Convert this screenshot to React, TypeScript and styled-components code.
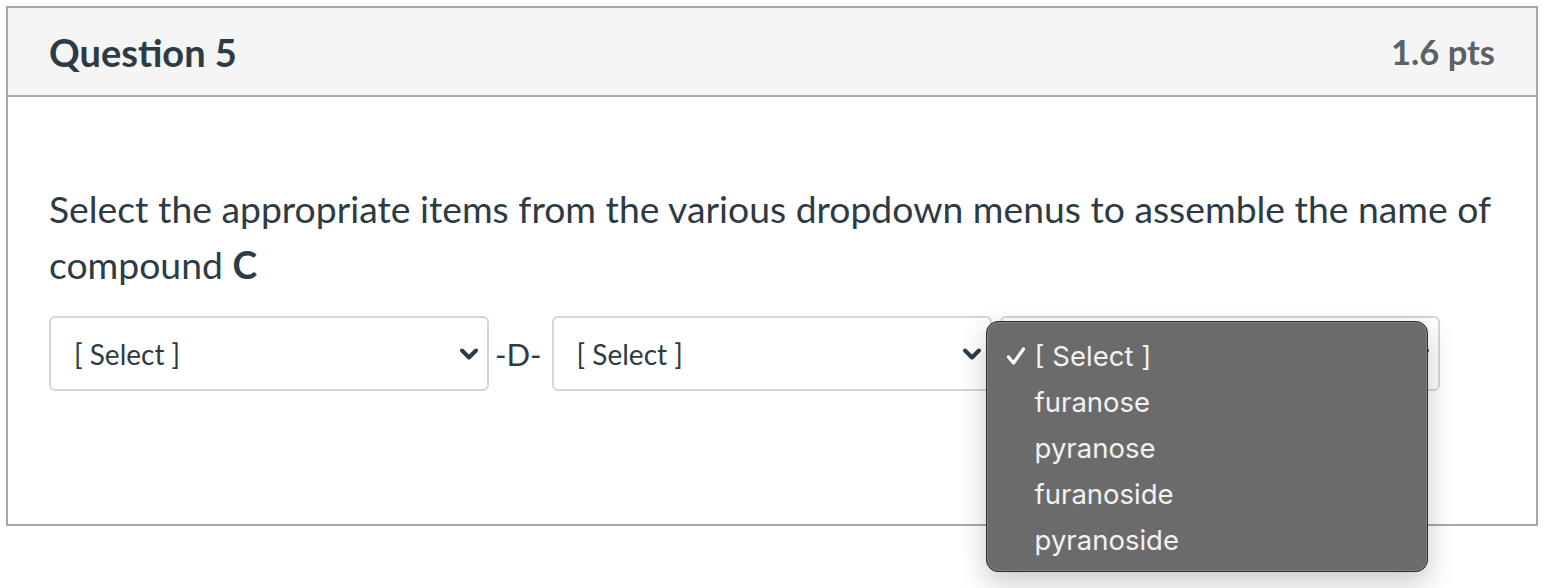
import React from "react";
import styled, { createGlobalStyle } from "styled-components";

const Global = createGlobalStyle`
  html, body { margin: 0; padding: 0; background: #ffffff; }
  body { font-family: Lato, "Open Sans", sans-serif; color: #2d3b45; min-height: 588px; }
`;

const Page = styled.div`
  padding: 6px 0 0 6px;
  width: 1532px;
  min-height: 582px;
`;

const Card = styled.div`
  border: 2px solid #a9a9a9;
  background: #fff;
`;

const Header = styled.div`
  height: 87px;
  background: #f5f5f5;
  border-bottom: 2px solid #a9a9a9;
  display: flex;
  align-items: center;
  justify-content: space-between;
  padding: 0 41px;
`;

const Title = styled.h2`
  margin: 0;
  font-family: Lato, sans-serif;
  font-weight: 700;
  font-size: 38px;
  color: #2d3b45;
`;

const Points = styled.div`
  font-family: Lato, sans-serif;
  font-weight: 700;
  font-size: 34.5px;
  color: #5b6166;
`;

const Body = styled.div`
  padding: 84px 41px 133px;
`;

const Prompt = styled.p`
  margin: 0 0 23px;
  font-size: 37.3px;
  line-height: 56px;
  color: #2d3b45;
`;

const Row = styled.div`
  display: flex;
  align-items: center;
`;

const SelectWrap = styled.div<{ $gap?: number }>`
  position: relative;
  width: 440px;
  height: 75px;
  margin-left: ${(p) => p.$gap ?? 0}px;
  box-sizing: border-box;
  border: 2px solid #d3d6d9;
  border-radius: 6px;
  display: flex;
  align-items: center;
  justify-content: space-between;
  padding: 0 8px 0 23px;
  background: #fff;
`;

const SelectText = styled.span`
  font-size: 28px;
  color: #2d3b45;
`;

const Sep = styled.span`
  margin-left: 6px;
  font-size: 31px;
  color: #2d3b45;
`;

const Popup = styled.div`
  position: absolute;
  left: -16px;
  top: 3px;
  width: 442px;
  height: 251px;
  box-sizing: border-box;
  background: #6b6b6b;
  border: 1px solid #2f2f2f;
  border-radius: 12px;
  box-shadow: 0 10px 28px rgba(0, 0, 0, 0.22), inset 0 0 0 1px rgba(255, 255, 255, 0.14);
  padding: 11px 0 0 0;
  z-index: 2;
`;

const Option = styled.div`
  height: 46px;
  display: flex;
  align-items: center;
  padding-left: 19px;
  font-family: Inter, "Liberation Sans", sans-serif;
  font-size: 27.5px;
  color: #f2f2f2;
`;

const CheckSlot = styled.span`
  width: 29px;
  display: inline-flex;
  align-items: center;
`;

const Chevron = () => (
  <svg width="20" height="14" viewBox="0 0 20 14">
    <polyline points="3,3.5 10,10.5 17,3.5" fill="none" stroke="#2d3b45" strokeWidth="4" strokeLinecap="round" strokeLinejoin="round" />
  </svg>
);

const Check = () => (
  <svg width="20" height="20" viewBox="0 0 20 20">
    <polyline points="2.5,11 7.5,17 17.5,3" fill="none" stroke="#ffffff" strokeWidth="3.2" strokeLinecap="round" strokeLinejoin="round" />
  </svg>
);

const options = ["[ Select ]", "furanose", "pyranose", "furanoside", "pyranoside"];

export default function App() {
  return (
    <>
      <Global />
      <Page>
        <Card>
          <Header>
            <Title>Question 5</Title>
            <Points>1.6 pts</Points>
          </Header>
          <Body>
            <Prompt>
              Select the appropriate items from the various dropdown menus to assemble the name of compound <b>C</b>
            </Prompt>
            <Row>
              <SelectWrap>
                <SelectText>[ Select ]</SelectText>
                <Chevron />
              </SelectWrap>
              <Sep>-D-</Sep>
              <SelectWrap $gap={10}>
                <SelectText>[ Select ]</SelectText>
                <Chevron />
              </SelectWrap>
              <SelectWrap $gap={8}>
                <SelectText>[ Select ]</SelectText>
                <Chevron />
                <Popup>
                  {options.map((o, i) => (
                    <Option key={o}>
                      <CheckSlot>{i === 0 ? <Check /> : null}</CheckSlot>
                      {o}
                    </Option>
                  ))}
                </Popup>
              </SelectWrap>
            </Row>
          </Body>
        </Card>
      </Page>
    </>
  );
}
